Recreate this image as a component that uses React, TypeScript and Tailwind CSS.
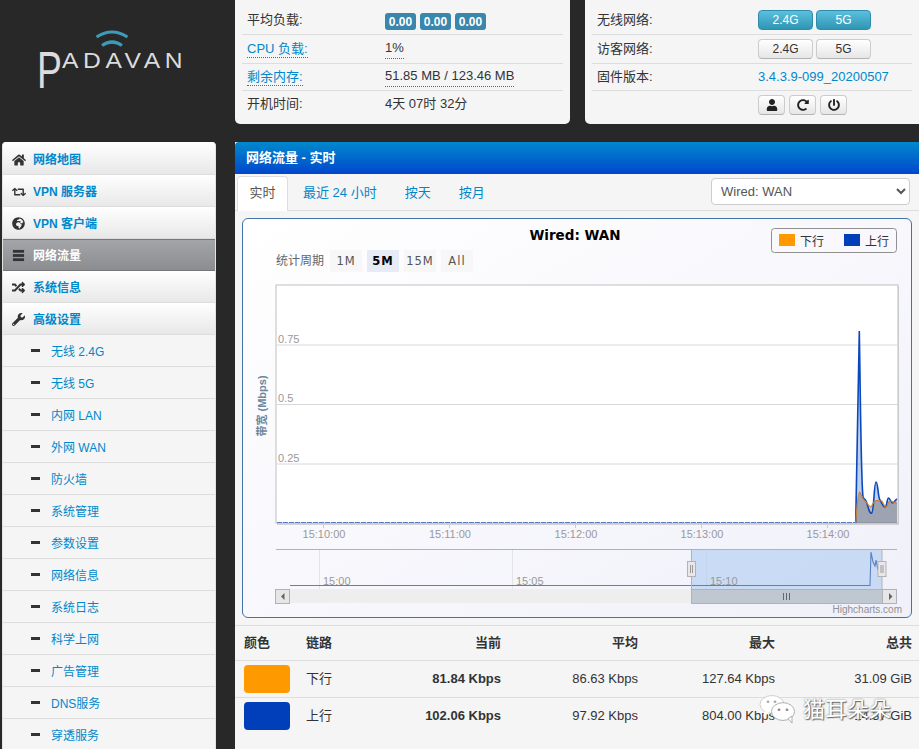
import { FaHome, FaRetweet, FaGlobeAfrica, FaRandom, FaWrench, FaUser, FaRedoAlt, FaPowerOff } from "react-icons/fa";

const sans = "font-['Liberation_Sans','Noto_Sans_CJK_SC',sans-serif]";

function Stripes() {
  return (
    <svg width="13" height="13" viewBox="0 0 14 14" fill="#333">
      <rect x="1" y="1" width="12" height="3" />
      <rect x="1" y="5.5" width="12" height="3" />
      <rect x="1" y="10" width="12" height="3" />
    </svg>
  );
}

const topNav = [
  { t: "网络地图", i: <FaHome size={14} color="#333" /> },
  { t: "VPN 服务器", i: <FaRetweet size={14} color="#333" /> },
  { t: "VPN 客户端", i: <FaGlobeAfrica size={13} color="#333" /> },
  { t: "网络流量", i: <Stripes />, active: true },
  { t: "系统信息", i: <FaRandom size={13} color="#333" /> },
  { t: "高级设置", i: <FaWrench size={13} color="#333" /> },
];
const subNav = ["无线 2.4G", "无线 5G", "内网 LAN", "外网 WAN", "防火墙", "系统管理", "参数设置", "网络信息", "系统日志", "科学上网", "广告管理", "DNS服务", "穿透服务"];

function Sidebar() {
  return (
    <div className="ml-[2px] w-[214px] rounded-t-[4px] overflow-hidden border-x border-[#e3e3e3] bg-white">
      {topNav.map((n, idx) =>
        n.active ? (
          <div key={n.t} className="h-[32px] flex items-center pl-[9px] pt-[1px] border-y border-[#777] bg-gradient-to-b from-[#a3a5a8] to-[#8b8d90]">
            <span className="w-[21px] flex justify-start">{n.i}</span>
            <span className="text-[12px] font-bold text-white">{n.t}</span>
          </div>
        ) : (
          <div key={n.t} className={`${idx === 0 ? "h-[33px] pt-[3px]" : "h-[32px] pt-[2px]"} flex items-center pl-[9px] border-b border-[#ddd] bg-gradient-to-b from-white to-[#e8e8e8]`}>
            <span className="w-[21px] flex justify-start">{n.i}</span>
            <span className="text-[12px] font-bold text-[#0088cc]">{n.t}</span>
          </div>
        )
      )}
      {subNav.map((t) => (
        <div key={t} className="h-[32px] flex items-center pl-[28px] pt-[2px] border-b border-[#ddd] bg-[#f5f5f5]">
          <span className="w-[9px] h-[3px] bg-[#333] mr-[11px] -mt-[3px]" />
          <span className="text-[12px] text-[#0088cc]">{t}</span>
        </div>
      ))}
    </div>
  );
}

function Logo() {
  return (
    <div className="h-[142px] w-full">
      <svg width="235" height="142" viewBox="0 0 235 142">
        <path d="M96.5 37 Q112 27 127.5 37" fill="none" stroke="#3d9ab8" strokeWidth="3.2" />
        <path d="M102 45.5 Q112 38.5 122 45.5" fill="none" stroke="#3d9ab8" strokeWidth="3.2" />
        <text transform="translate(37 88) scale(0.72 1)" fontSize="52" fill="#dcdcdc" fontFamily="Liberation Sans">P</text>
        <text transform="translate(62 67.5) scale(1.12 1)" fontSize="22" letterSpacing="4.1" fill="#dcdcdc" fontFamily="Liberation Sans">ADAVAN</text>
      </svg>
    </div>
  );
}

function Row({ label, children, labelLink, last, col, h }: { label?: string; children?: React.ReactNode; labelLink?: boolean; last?: boolean; col: string; h: string }) {
  return (
    <div className={`flex items-center ${h} px-[5px] ${last ? "" : "border-b border-[#ddd]"}`}>
      <span className={`${col} ${labelLink ? "text-[#0088cc]" : "text-[#333]"}`}>
        {labelLink ? <span className="border-b border-dotted border-[#0088cc] pb-[1px]">{label}</span> : label}
      </span>
      {children}
    </div>
  );
}

function Badge() {
  return <span className="w-[31px] h-[17px] rounded-[3px] bg-[#3a87ad] text-white font-bold text-[12px] flex items-center justify-center">0.00</span>;
}
function BlueBtn({ t }: { t: string }) {
  return <span className="w-[55px] h-[20px] rounded-[4px] border border-[#2f8bab] bg-gradient-to-b from-[#5bc0de] to-[#2f96b4] text-white text-[12px] flex items-center justify-center">{t}</span>;
}
function GreyBtn({ t }: { t: string }) {
  return <span className="w-[55px] h-[20px] rounded-[4px] border border-[#ccc] border-b-[#b3b3b3] bg-gradient-to-b from-white to-[#e6e6e6] text-[#333] text-[12px] flex items-center justify-center">{t}</span>;
}
function IconBtn({ children }: { children: React.ReactNode }) {
  return <span className="w-[27px] h-[20px] rounded-[4px] border border-[#ccc] border-b-[#b3b3b3] bg-gradient-to-b from-white to-[#e6e6e6] flex items-center justify-center">{children}</span>;
}

const h1 = "h-[29px]";
const h2 = "h-[29px] pb-[1px]";
const h3 = "h-[27px] pb-[1px]";
const h4 = "h-[25px]";

function TopCards() {
  return (
    <div className="h-[142px] flex gap-[15px]">
      <div className="w-[335px] h-[124px] rounded-b-[5px] bg-[#f5f5f5] px-[7px] pt-[6px] text-[13px]">
        <Row h={h1} label="平均负载:" col="w-[138px]">
          <span className="flex gap-[4px] mt-[3px]"><Badge /><Badge /><Badge /></span>
        </Row>
        <Row h={h2} label="CPU 负载:" labelLink col="w-[138px]">
          <span className="text-[#333] border-b border-dotted border-[#0088cc] pb-[1px]">1%</span>
        </Row>
        <Row h={h3} label="剩余内存:" labelLink col="w-[138px]">
          <span className="text-[#333] border-b border-dotted border-[#0088cc] pb-[1px]">51.85 MB / 123.46 MB</span>
        </Row>
        <Row h={h4} label="开机时间:" last col="w-[138px]">
          <span className="text-[#333]">4天 07时 32分</span>
        </Row>
      </div>
      <div className="flex-1 h-[124px] rounded-bl-[5px] bg-[#f5f5f5] px-[7px] pt-[6px] text-[13px]">
        <Row h={h1} label="无线网络:" col="w-[161px]">
          <span className="flex gap-[3px]"><BlueBtn t="2.4G" /><BlueBtn t="5G" /></span>
        </Row>
        <Row h={h2} label="访客网络:" col="w-[161px]">
          <span className="flex gap-[3px]"><GreyBtn t="2.4G" /><GreyBtn t="5G" /></span>
        </Row>
        <Row h={h3} label="固件版本:" col="w-[161px]">
          <span className="text-[#0088cc]">3.4.3.9-099_20200507</span>
        </Row>
        <Row h={h4} last col="w-[161px]">
          <span className="flex gap-[4px] mt-[3px]">
            <IconBtn><FaUser size={12} color="#222" /></IconBtn>
            <IconBtn><FaRedoAlt size={12} color="#222" /></IconBtn>
            <IconBtn><FaPowerOff size={12} color="#222" /></IconBtn>
          </span>
        </Row>
      </div>
    </div>
  );
}

const bluePts = "M855.7 523 L859.3 331 C860.5 400 861 480 863 497 C864 499 865 499 866 501 C868 505 869 514 871.7 513 C874 512 874 482 876 482 C878 482 878 498 880 500 C882 503 883 507 885 507 C887 507 887 498 888.5 498 C890 498 891 503 892.5 503 C894 503 895 500 897 499";
const orangePts = "M855.7 523 C857 505 858 492 859.5 492 C861 492 862 499 864 500 C866 501 868 506 870.7 507 C872 507 873 502 875 501 C877 500 880 501 881.7 501 C883 502 884 507 886 507 C888 507 888 501 890 501 C892 501 894 503 897 503";

function Chart() {
  const axis = { fontSize: 11, fill: "#999", fontFamily: "Liberation Sans" };
  const gray = "#f7f7f7";
  const range = [
    { t: "1M", x: 330 },
    { t: "5M", x: 367, on: true },
    { t: "15M", x: 404 },
    { t: "All", x: 441 },
  ];
  return (
    <div className="mx-[7px] mt-[7px] h-[400px] rounded-[6px] border border-[#4572a7] overflow-hidden bg-gradient-to-br from-white to-[#f0f0fa]">
      <svg width="668" height="398" viewBox="243 219 668 398" className="block">
        <text x="575" y="240" textAnchor="middle" fontSize="13.5" fontWeight="bold" fill="#000" fontFamily="DejaVu Sans">Wired: WAN</text>

        <text x="276" y="265" fontSize="12" fill="#666" fontFamily="Noto Sans CJK SC">统计周期</text>
        {range.map((r) => (
          <g key={r.t}>
            <rect x={r.x} y="250" width="32" height="22" fill={r.on ? "#e6ebf5" : gray} />
            <text x={r.x + 16} y="264.5" textAnchor="middle" fontSize="11.5" letterSpacing="1" fontWeight={r.on ? "bold" : "normal"} fill={r.on ? "#000" : "#555"} fontFamily="DejaVu Sans">{r.t}</text>
          </g>
        ))}

        <rect x="771.5" y="228.5" width="125" height="24" rx="3" fill="none" stroke="#909090" />
        <rect x="779" y="234" width="16" height="12" fill="#ff9900" />
        <text x="800" y="246" fontSize="12" fill="#333" fontFamily="Noto Sans CJK SC">下行</text>
        <rect x="844" y="234" width="16" height="12" fill="#003eba" />
        <text x="865" y="246" fontSize="12" fill="#333" fontFamily="Noto Sans CJK SC">上行</text>

        <text transform="translate(266 406) rotate(-90)" textAnchor="middle" fontSize="11" fontWeight="bold" fill="#6d869f" fontFamily="Liberation Sans, Noto Sans CJK SC">带宽 (Mbps)</text>

        <rect x="277" y="286" width="622" height="239" fill="#c4c4c4" opacity="0.7" />
        <rect x="276" y="285" width="622" height="238" fill="#fff" stroke="#c0c0c0" />
        {[345, 404.5, 464].map((y) => (
          <line key={y} x1="276" x2="898" y1={y} y2={y} stroke="#d8d8d8" />
        ))}
        <text x="278" y="343" {...axis}>0.75</text>
        <text x="278" y="402" {...axis}>0.5</text>
        <text x="278" y="462" {...axis}>0.25</text>

        {[323.5, 449.5, 575.5, 701.5, 827.5].map((x, i) => (
          <g key={x}>
            <line x1={x} x2={x} y1="523" y2="528" stroke="#c0d0e0" />
            <text x={x + 0.5} y="538" textAnchor="middle" {...axis}>{`15:1${i}:00`}</text>
          </g>
        ))}

        <line x1="277" x2="856" y1="522.5" y2="522.5" stroke="#003eba" strokeDasharray="5 1" opacity="0.6" />
        <path d={`${bluePts} L897 523 Z`} fill="#003eba" fillOpacity="0.25" />
        <path d={`${orangePts} L897 523 Z`} fill="#ff9900" fillOpacity="0.06" />
        <path d={`${orangePts} L897 523 Z`} fill="#555" fillOpacity="0.34" />
        <path d={bluePts} fill="none" stroke="#0a48bd" strokeWidth="1.6" />
        <path d={orangePts} fill="none" stroke="#c9803a" strokeWidth="1.2" />

        <line x1="276" x2="897" y1="549.5" y2="549.5" stroke="#b2b1b6" />
        {[319.5, 512.5, 706.5].map((x) => (
          <line key={x} x1={x} x2={x} y1="550" y2="589" stroke="#e4e4e8" />
        ))}
        <rect x="691.5" y="550" width="190.5" height="39" fill="#a8c6f0" fillOpacity="0.55" />
        <text x="323" y="585" {...axis}>15:00</text>
        <text x="516" y="585" {...axis}>15:05</text>
        <text x="710" y="585" {...axis}>15:10</text>
        <path d="M290 585.5 L870 585.5 L871 552 L873 562 L875 566 L876 560 L878 570 L880 562 L882 563" fill="none" stroke="#5a80c0" strokeWidth="1.1" />
        <line x1="691.5" x2="691.5" y1="549" y2="589" stroke="#b2b1b6" />
        <line x1="882" x2="882" y1="549" y2="589" stroke="#b2b1b6" />

        <rect x="276" y="589" width="621" height="14" fill="#eeeeee" />
        <rect x="275.5" y="589.5" width="14" height="14" fill="#e6e6e6" stroke="#b2b1b6" />
        <path d="M284.5 593 L284.5 600 L281 596.5 Z" fill="#666" />
        <rect x="691.5" y="589.5" width="191" height="14" fill="#bfc8d1" stroke="#b2b1b6" />
        <path d="M783.5 593v7M786.5 593v7M789.5 593v7" stroke="#666" />
        <rect x="882.5" y="589.5" width="14" height="14" fill="#e6e6e6" stroke="#b2b1b6" />
        <path d="M889 593 L889 600 L892.5 596.5 Z" fill="#666" />

        {[687.5, 878].map((x) => (
          <g key={x}>
            <rect x={x} y="561.5" width="8" height="15" fill="#ebe7e8" stroke="#b2b1b6" />
            <path d={`M${x + 3} 565v8M${x + 5} 565v8`} stroke="#999" />
          </g>
        ))}
        <text x="902" y="613" textAnchor="end" fontSize="10" fill="#909090" fontFamily="Liberation Sans">Highcharts.com</text>
      </svg>
    </div>
  );
}

const rows = [
  { c: "bg-[#ff9900]", n: "下行", a: "81.84 Kbps", b: "86.63 Kbps", d: "127.64 Kbps", e: "31.09 GiB" },
  { c: "bg-[#003eba]", n: "上行", a: "102.06 Kbps", b: "97.92 Kbps", d: "804.00 Kbps", e: "14.37 GiB" },
];

function Table() {
  return (
    <div className="mt-[7px] border-t border-[#ddd] text-[13px] text-[#333]">
      <div className="grid grid-cols-[62px_75px_137px_137px_137px_136px] items-center h-[35px] font-bold border-b border-[#ddd]">
        <span className="pl-[9px]">颜色</span>
        <span className="pl-[9px]">链路</span>
        <span className="text-right pr-[8px]">当前</span>
        <span className="text-right pr-[8px]">平均</span>
        <span className="text-right pr-[8px]">最大</span>
        <span className="text-right pr-[7px]">总共</span>
      </div>
      {rows.map((r, i) => (
        <div key={r.n} className={`grid grid-cols-[62px_75px_137px_137px_137px_136px] items-center ${i === 0 ? "h-[37px] pb-[1px] border-b border-[#ddd]" : "h-[36px]"}`}>
          <span className="pl-[9px]"><span className={`block w-[46px] h-[28px] rounded-[4px] ${r.c}`} /></span>
          <span className="pl-[9px]">{r.n}</span>
          <span className="text-right pr-[8px] font-bold">{r.a}</span>
          <span className="text-right pr-[8px]">{r.b}</span>
          <span className="text-right pr-[8px]">{r.d}</span>
          <span className="text-right pr-[7px]">{r.e}</span>
        </div>
      ))}
    </div>
  );
}

function Watermark() {
  return (
    <div className="absolute left-[759px] top-[692px] flex items-start gap-[6px]">
      <svg width="38" height="32" viewBox="0 0 38 36" preserveAspectRatio="none">
        <ellipse cx="13" cy="14" rx="12" ry="10" fill="#fff" stroke="#ccc" />
        <path d="M6 21 L4 27 L11 24 Z" fill="#fff" />
        <ellipse cx="24" cy="22" rx="11.5" ry="10" fill="#fff" stroke="#aaa" />
        <path d="M29 30 L33 35 L33 27 Z" fill="#fff" stroke="#aaa" />
        <circle cx="9" cy="11" r="1.4" fill="#aaa" />
        <circle cx="16" cy="11" r="1.4" fill="#aaa" />
        <circle cx="20" cy="20" r="1.4" fill="#888" />
        <circle cx="28" cy="20" r="1.4" fill="#888" />
      </svg>
      <span className="mt-[3px] text-[22px] leading-[30px] text-white [text-shadow:1px_1px_1px_#666,0_0_2px_#777]">猫耳朵朵</span>
    </div>
  );
}

export default function App() {
  return (
    <div className={`relative w-[919px] h-[749px] overflow-hidden flex bg-[#282828] ${sans}`}>
      <div className="w-[235px] shrink-0">
        <Logo />
        <Sidebar />
      </div>
      <div className="flex-1 flex flex-col">
        <TopCards />
        <div className="flex-1 bg-[#f5f5f5]">
          <div className="h-[32px] flex items-center pl-[11px] text-[13px] font-bold text-white bg-gradient-to-b from-[#0088cc] to-[#0044cc] rounded-tl-[4px]">网络流量 - 实时</div>
          <div className="h-[37px] flex items-end border-b border-[#ddd] relative">
            <div className="ml-[2px] h-[35px] w-[51px] -mb-[1px] pb-[2px] border border-b-0 border-[#ddd] rounded-t-[4px] bg-white flex items-center justify-center text-[13px] text-[#555]">实时</div>
            <div className="h-[35px] flex items-center text-[13px] text-[#0088cc] pl-[15px] gap-[28px]">
              <span>最近 24 小时</span>
              <span>按天</span>
              <span>按月</span>
            </div>
            <select defaultValue="wan" className="absolute right-[9px] top-[4px] w-[199px] h-[27px] bg-white border border-[#ccc] rounded-[4px] text-[13px] text-[#555] pl-[5px]">
              <option value="wan">Wired: WAN</option>
            </select>
          </div>
          <Chart />
          <Table />
        </div>
      </div>
      <Watermark />
    </div>
  );
}
